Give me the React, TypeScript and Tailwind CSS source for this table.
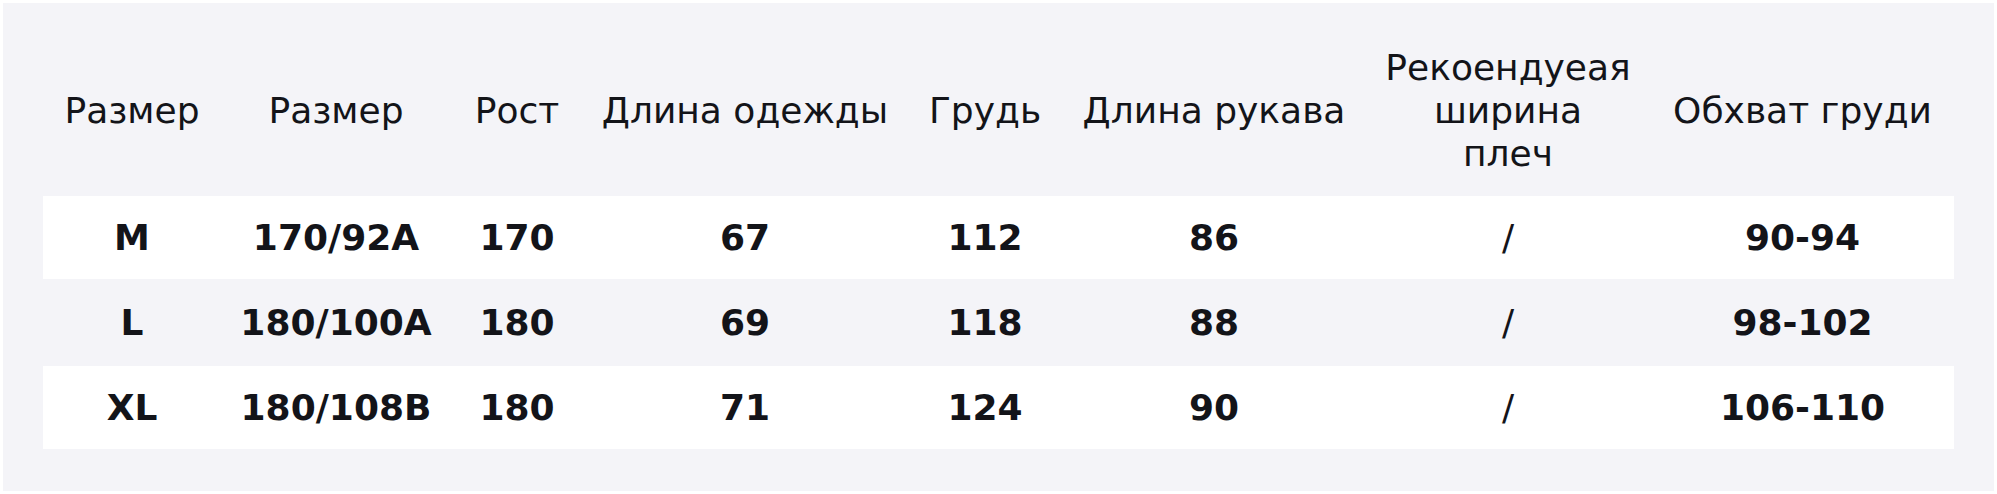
const columns = [
  "w-[178px]",
  "w-[230px]",
  "w-[132px]",
  "w-[324px]",
  "w-[156px]",
  "w-[302px]",
  "w-[286px]",
  "flex-1",
];

const headers = [
  "Размер",
  "Размер",
  "Рост",
  "Длина одежды",
  "Грудь",
  "Длина рукава",
  "Рекоендуеая ширина плеч",
  "Обхват груди",
];

type SizeRow = {
  cells: string[];
  className: string;
};

const rows: SizeRow[] = [
  {
    cells: ["M", "170/92A", "170", "67", "112", "86", "/", "90-94"],
    className: "h-[83px] bg-white",
  },
  {
    cells: ["L", "180/100A", "180", "69", "118", "88", "/", "98-102"],
    className: "h-[87px] bg-[#f4f4f8]",
  },
  {
    cells: ["XL", "180/108B", "180", "71", "124", "90", "/", "106-110"],
    className: "h-[83px] bg-white",
  },
];

export default function App() {
  return (
    <div className="min-h-[494px] bg-white p-[3px] font-['DejaVu_Sans',sans-serif] text-[36px] leading-[43px] text-[#131419]">
      <div className="bg-[#f4f4f8] px-[40px] pt-[40px] pb-[42px]">
        {/* header */}
        <div className="flex h-[153px] items-center pb-[19px]">
          {headers.map((label, i) => (
            <div
              className={`${columns[i]} px-[6px] text-center font-normal`}
              key={`${label}-${i}`}
            >
              {label === "Рекоендуеая ширина плеч" ? (
                <>
                  Рекоендуеая
                  <br />
                  ширина
                  <br />
                  плеч
                </>
              ) : (
                label
              )}
            </div>
          ))}
        </div>

        {rows.map((row) => (
          <div className={`flex items-center ${row.className}`} key={row.cells[0]}>
            {row.cells.map((value, i) => (
              <div
                className={`${columns[i]} text-center ${
                  i === 6 ? "font-normal" : "font-bold"
                }`}
                key={i}
              >
                {value}
              </div>
            ))}
          </div>
        ))}
      </div>
    </div>
  );
}
